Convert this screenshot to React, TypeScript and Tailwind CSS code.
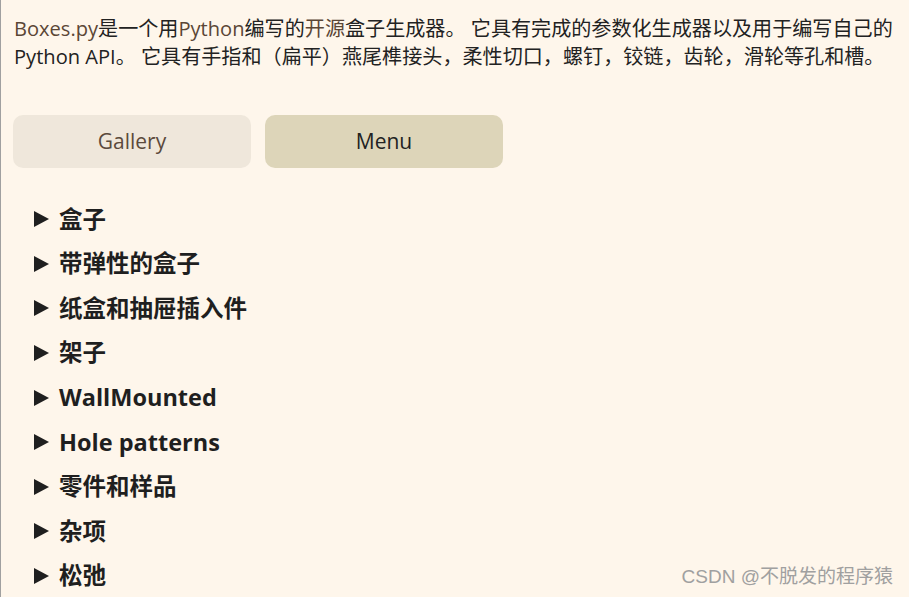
const SANS = "font-['Open_Sans','Noto_Sans_CJK_SC',sans-serif]";

const CATEGORIAS = [
  "盒子",
  "带弹性的盒子",
  "纸盒和抽屉插入件",
  "架子",
  "WallMounted",
  "Hole patterns",
  "零件和样品",
  "杂项",
  "松弛",
];

// Triângulo do marcador do <summary>
function Marcador() {
  return (
    <svg width="15" height="16" viewBox="0 0 15 16" className="shrink-0">
      <path d="M0 0 L15 8 L0 16 Z" fill="#1f1f1f" />
    </svg>
  );
}

export default function App() {
  return (
    <div
      className={`relative h-[597px] w-[909px] overflow-hidden border-l border-[#a0a0a0] bg-[#fef6eb] ${SANS}`}
    >
      {/* Descrição */}
      <p className="whitespace-nowrap px-[13px] pt-[15px] text-[20.1px] leading-[28px] text-[#222]">
        <a className="text-[#5b4636]">Boxes.py</a>是一个用
        <a className="text-[#5b4636]">Python</a>编写的
        <a className="text-[#5b4636]">开源</a>盒子生成器。
        它具有完成的参数化生成器以及用于编写自己的
        <br />
        Python API。
        它具有手指和（扁平）燕尾榫接头，柔性切口，螺钉，铰链，齿轮，滑轮等孔和槽。
      </p>

      {/* Abas */}
      <div className="mt-[44px] flex gap-[14px] px-[12px]">
        <button className="h-[53px] w-[238px] rounded-[10px] bg-[#efe7db] text-[21px] text-[#5b4a3c]">
          Gallery
        </button>
        <button className="h-[53px] w-[238px] rounded-[10px] bg-[#ddd5b9] text-[21px] text-[#222]">
          Menu
        </button>
      </div>

      {/* Lista de categorias */}
      <div className="mt-[29px] flex flex-col pl-[33px]">
        {CATEGORIAS.map((c) => (
          <div
            key={c}
            className="flex h-[44.6px] items-center gap-[10px] text-[23.5px] font-bold text-[#1f1f1f]"
          >
            <Marcador />
            <span>{c}</span>
          </div>
        ))}
      </div>

      <span className="absolute bottom-[6px] right-[16px] font-['Liberation_Sans','Noto_Sans_CJK_SC',sans-serif] text-[19px] text-[#a0a0a0]">
        CSDN @不脱发的程序猿
      </span>
    </div>
  );
}
